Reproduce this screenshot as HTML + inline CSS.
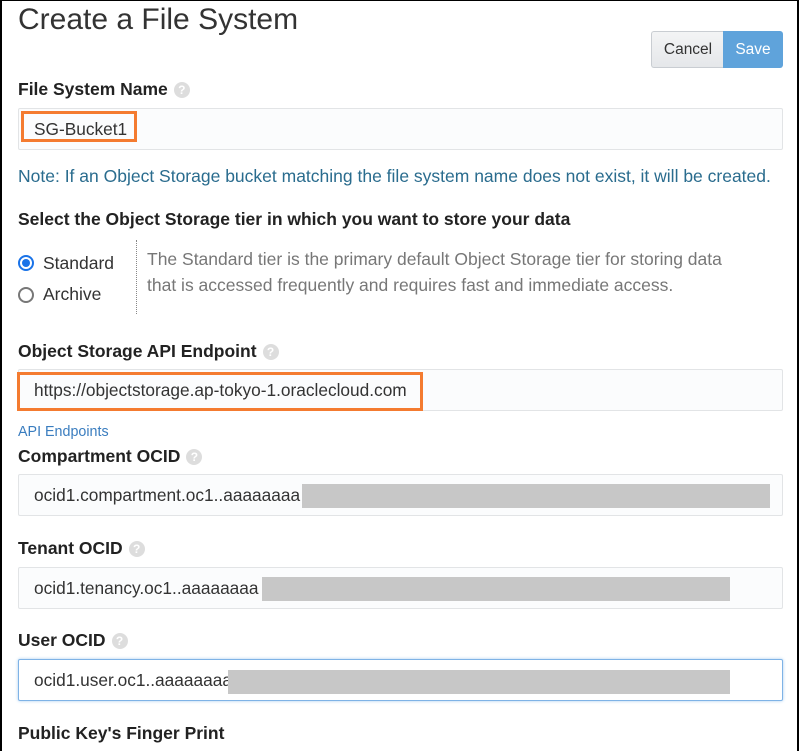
<!DOCTYPE html>
<html><head><style>
body{margin:0;width:799px;height:744px;overflow:hidden;background:#fff;font-family:"Liberation Sans",sans-serif;position:relative}
.frame{position:absolute;left:0;top:0;width:795px;height:750px;border-left:2px solid #000;border-top:1px solid #000;border-right:2px solid #000}
.a{position:absolute;white-space:nowrap}
h1{position:absolute;left:18px;top:3px;margin:0;font-weight:normal;font-size:30px;color:#333}
.lbl{font-weight:bold;font-size:17.5px;color:#222}
.q{display:inline-block;width:16px;height:16px;border-radius:50%;background:#ddd;color:#fff;font-size:12px;text-align:center;line-height:16px;vertical-align:1px;margin-left:6px;font-weight:bold}
.in{position:absolute;left:18px;width:763px;height:40px;border:1px solid #e2e4e6;background:#fbfcfd;border-radius:2px}
.in span{position:absolute;left:15px;top:10px;font-size:17.3px;color:#333}
.red{position:absolute;background:#c7c7c7;height:24px}
.hl{position:absolute;border:3px solid #f47b30}
</style></head><body>
<div class="frame"></div>
<h1>Create a File System</h1>
<div class="a" style="left:651px;top:31px;width:72px;height:35px;border:1px solid #c9cdd2;border-right:none;border-radius:3px 0 0 3px;background:linear-gradient(#f3f4f5,#e5e7ea);font-size:15.5px;color:#333;text-align:center;line-height:35px">Cancel</div>
<div class="a" style="left:723px;top:31px;width:60px;height:37px;border-radius:0 3px 3px 0;background:#5fa3db;font-size:15.5px;color:#fff;text-align:center;line-height:37px">Save</div>

<div class="a lbl" style="left:18px;top:79px">File System Name<span class="q">?</span></div>
<div class="in" style="top:108px"><span>SG-Bucket1</span></div>
<div class="hl" style="left:21px;top:111px;width:110px;height:25px"></div>
<div class="a" style="left:18px;top:166px;font-size:17.5px;color:#2a6c8e">Note: If an Object Storage bucket matching the file system name does not exist, it will be created.</div>

<div class="a lbl" style="left:18px;top:209px">Select the Object Storage tier in which you want to store your data</div>
<div class="a" style="left:18px;top:255px;width:16px;height:16px;border:2px solid #1a73e8;border-radius:50%;box-sizing:border-box"><div style="position:absolute;left:2px;top:2px;width:8px;height:8px;border-radius:50%;background:#1a73e8"></div></div>
<div class="a" style="left:43px;top:253px;font-size:17.5px;color:#333">Standard</div>
<div class="a" style="left:18px;top:287px;width:16px;height:16px;border:2px solid #777;border-radius:50%;box-sizing:border-box"></div>
<div class="a" style="left:43px;top:284px;font-size:17.5px;color:#333">Archive</div>
<div class="a" style="left:136px;top:240px;height:74px;border-left:1px dotted #888"></div>
<div class="a" style="left:147px;top:246px;font-size:17.5px;color:#777;line-height:26px">The Standard tier is the primary default Object Storage tier for storing data<br>that is accessed frequently and requires fast and immediate access.</div>

<div class="a lbl" style="left:18px;top:341px">Object Storage API Endpoint<span class="q">?</span></div>
<div class="in" style="top:369px"><span>https://objectstorage.ap-tokyo-1.oraclecloud.com</span></div>
<div class="hl" style="left:17px;top:372px;width:400px;height:33px"></div>
<div class="a" style="left:18px;top:424px;font-size:14.3px;color:#3a7dbf">API Endpoints</div>

<div class="a lbl" style="left:18px;top:446px">Compartment OCID<span class="q">?</span></div>
<div class="in" style="top:474px"><span>ocid1.compartment.oc1..aaaaaaaa</span></div>
<div class="red" style="left:302px;top:484px;width:468px"></div>

<div class="a lbl" style="left:18px;top:538px">Tenant OCID<span class="q">?</span></div>
<div class="in" style="top:567px"><span>ocid1.tenancy.oc1..aaaaaaaa</span></div>
<div class="red" style="left:262px;top:577px;width:468px"></div>

<div class="a lbl" style="left:18px;top:630px">User OCID<span class="q">?</span></div>
<div class="in" style="top:659px;border-color:#7fb3e6;box-shadow:0 0 3px #a8cdf0;background:#fff"><span>ocid1.user.oc1..aaaaaaaa</span></div>
<div class="red" style="left:228px;top:670px;width:502px"></div>

<div class="a lbl" style="left:18px;top:723px">Public Key's Finger Print</div>
</body></html>
